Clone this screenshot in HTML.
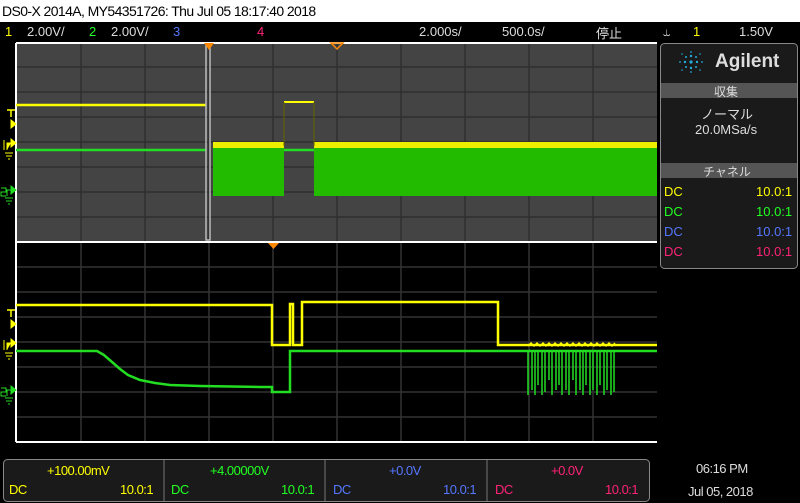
<!DOCTYPE html>
<html><head><meta charset="utf-8"><style>
body{margin:0;width:800px;height:503px;background:#000;overflow:hidden;position:relative;font-family:"Liberation Sans","Noto Sans CJK JP",sans-serif}
.t{position:absolute;white-space:nowrap}
.c{letter-spacing:-0.5px}
</style></head><body>
<div style="position:absolute;left:0;top:0;width:800px;height:22px;background:#fff"></div>
<div class="t" style="left:2px;top:3px;font-size:14px;color:#000;letter-spacing:-0.6px">DS0-X 2014A, MY54351726: Thu Jul 05 18:17:40 2018</div>
<div class="t" style="left:5px;top:24px;font-size:13px;color:#ff0">1</div>
<div class="t" style="left:27px;top:24px;font-size:13px;color:#ddd">2.00V/</div>
<div class="t" style="left:89px;top:24px;font-size:13px;color:#2f2">2</div>
<div class="t" style="left:111px;top:24px;font-size:13px;color:#ddd">2.00V/</div>
<div class="t" style="left:173px;top:24px;font-size:13px;color:#57f">3</div>
<div class="t" style="left:257px;top:24px;font-size:13px;color:#f27">4</div>
<div class="t" style="left:419px;top:24px;font-size:13px;color:#ddd">2.000s/</div>
<div class="t" style="left:502px;top:24px;font-size:13px;color:#ddd">500.0s/</div>
<div class="t" style="left:596px;top:23px;font-size:13px;color:#ddd">停止</div>
<div class="t" style="left:663px;top:24px;font-size:13px;color:#ddd">⥿</div>
<div class="t" style="left:693px;top:24px;font-size:13px;color:#ff0">1</div>
<div class="t" style="left:739px;top:24px;font-size:13px;color:#ddd">1.50V</div>

<svg style="position:absolute;left:0;top:0" width="800" height="503">
<rect x="16" y="43" width="641" height="199" fill="#444"/>
<g stroke="#2e2e2e" stroke-width="1.5">
<path d="M81 43V242M145 43V242M209 43V242M273 43V242M337 43V242M401 43V242M465 43V242M529 43V242M593 43V242"/>
<path d="M16 67H657M16 92H657M16 117H657M16 142H657M16 167H657M16 192H657M16 217H657"/>
</g>
<g stroke="#333" stroke-width="1.5">
<path d="M81 242V442M145 242V442M209 242V442M273 242V442M337 242V442M401 242V442M465 242V442M529 242V442M593 242V442"/>
<path d="M16 267H657M16 292H657M16 317H657M16 342H657M16 367H657M16 392H657M16 417H657"/>
</g>
<path d="M16 43H657M16 242H657M16 442H657M16 43V442" stroke="#fff" stroke-width="2" fill="none"/>
<path d="M16 105H206" stroke="#ff0" stroke-width="2.5"/>
<path d="M16 150H206M284 150H314" stroke="#2d2" stroke-width="2.5"/>
<rect x="213" y="146" width="71" height="50" fill="#2b0"/>
<rect x="314" y="146" width="343" height="50" fill="#2b0"/>
<rect x="213" y="142" width="71" height="6" fill="#ee0"/>
<rect x="314" y="142" width="343" height="6" fill="#ee0"/>
<path d="M284 102H314" stroke="#ff0" stroke-width="2"/>
<path d="M284 102V146M314 102V146" stroke="#660" stroke-width="1"/>
<rect x="206" y="44" width="4" height="196" fill="none" stroke="#bbb" stroke-width="1.5"/>
<path d="M204 43h10l-5 7z" fill="#f80"/>
<path d="M331 43h12l-6 6z" fill="none" stroke="#f80" stroke-width="1.5"/>
<path d="M268 243h11l-5.5 6z" fill="#f80"/>
<path d="M16 305H272V345H290V304H293V345H302V302H498V345H657" stroke="#ff0" stroke-width="2.5" fill="none"/>
<path d="M16 351H97L104 355L112 362L120 369L128 375L140 380L155 383L170 385L200 386L260 387L272 387V392H290V351H657" stroke="#2d2" stroke-width="2.5" fill="none"/>
<path d="M528 351V395M532 351V390M535 351V395M538 351V385M542 351V395M545 351V392M549 351V380M552 351V395M556 351V390M559 351V385M562 351V395M566 351V390M569 351V395M573 351V380M576 351V395M580 351V390M583 351V395M586 351V385M590 351V395M593 351V390M597 351V395M600 351V385M604 351V395M607 351V390M611 351V395M614 351V392" stroke="#2d2" stroke-width="1.5"/>
<path d="M528 346l3-3 3 3 3-3 3 3 3-3 3 3 3-3 3 3 3-3 3 3 3-3 3 3 3-3 3 3 3-3 3 3 3-3 3 3 3-3 3 3 3-3 3 3 3-3 3 3 3-3 3 3 3-3 3 3 3-3" stroke="#ff0" stroke-width="1.5" fill="none"/>
<g fill="#ff0" stroke="#ff0">
<path d="M7 110H15M11 110V117" stroke-width="1.5" fill="none"/>
<path d="M11 120l5 4-5 4z"/>
<path d="M4 140V150M7 150V143H11M11 139l5 4-5 4z M5 153h8M6 156h6M8 159h2" stroke-width="1"/>
<path d="M7 310H15M11 310V317" stroke-width="1.5" fill="none"/>
<path d="M11 320l5 4-5 4z"/>
<path d="M4 340V350M7 350V343H11M11 339l5 4-5 4z M5 353h8M6 356h6M8 359h2" stroke-width="1"/>
</g>
<g fill="#2d2" stroke="#2d2">
<path d="M1 188h5v4h-5v4h5M7 196V190H11M5 198h8M6 201h6M8 204h2" stroke-width="1" fill="none"/>
<path d="M11 186l5 4-5 4z"/>
<path d="M1 388h5v4h-5v4h5M7 396V390H11M5 398h8M6 401h6M8 404h2" stroke-width="1" fill="none"/>
<path d="M11 386l5 4-5 4z"/>
</g>
<rect x="660.5" y="43.5" width="137" height="225" rx="4" fill="#1a1a1a" stroke="#888"/>
<rect x="661" y="83" width="136" height="15" fill="#555"/>
<rect x="661" y="163" width="136" height="15" fill="#555"/>
<g fill="#2ad">
<circle cx="691" cy="62" r="1.6"/><circle cx="685" cy="62" r="1.2"/><circle cx="697" cy="62" r="1.2"/><circle cx="680" cy="62" r="0.9"/><circle cx="702" cy="62" r="0.9"/>
<circle cx="691" cy="56" r="1.2"/><circle cx="691" cy="68" r="1.2"/><circle cx="691" cy="52" r="0.9"/><circle cx="691" cy="72" r="0.9"/>
<circle cx="686" cy="57" r="1"/><circle cx="696" cy="57" r="1"/><circle cx="686" cy="67" r="1"/><circle cx="696" cy="67" r="1"/>
<circle cx="682" cy="54" r="0.8"/><circle cx="700" cy="54" r="0.8"/><circle cx="682" cy="70" r="0.8"/><circle cx="700" cy="70" r="0.8"/>
</g>
<rect x="3.5" y="459.5" width="646" height="42" rx="4" fill="#1a1a1a" stroke="#888"/>
<path d="M164 460V501M325 460V501M487 460V501" stroke="#777"/>
</svg>
<div class="t" style="left:715px;top:51px;font-size:19px;font-weight:bold;color:#ddd">Agilent</div>
<div class="t" style="left:714px;top:83px;font-size:12px;color:#ddd">収集</div>
<div class="t" style="left:701px;top:104px;font-size:13px;color:#ddd">ノーマル</div>
<div class="t" style="left:695px;top:122px;font-size:13px;color:#ddd">20.0MSa/s</div>
<div class="t" style="left:703px;top:163px;font-size:12px;color:#ddd">チャネル</div>
<div class="t" style="left:664px;top:184px;font-size:13px;color:#ff0">DC</div><div class="t" style="left:756px;top:184px;font-size:13px;color:#ff0">10.0:1</div>
<div class="t" style="left:664px;top:204px;font-size:13px;color:#2f2">DC</div><div class="t" style="left:756px;top:204px;font-size:13px;color:#2f2">10.0:1</div>
<div class="t" style="left:664px;top:224px;font-size:13px;color:#57f">DC</div><div class="t" style="left:756px;top:224px;font-size:13px;color:#57f">10.0:1</div>
<div class="t" style="left:664px;top:244px;font-size:13px;color:#f27">DC</div><div class="t" style="left:756px;top:244px;font-size:13px;color:#f27">10.0:1</div>

<div class="t c" style="left:47px;top:463px;font-size:13px;color:#ff0">+100.00mV</div>
<div class="t c" style="left:9px;top:482px;font-size:13px;color:#ff0">DC</div><div class="t c" style="left:120px;top:482px;font-size:13px;color:#ff0">10.0:1</div>
<div class="t c" style="left:210px;top:463px;font-size:13px;color:#2f2">+4.00000V</div>
<div class="t c" style="left:171px;top:482px;font-size:13px;color:#2f2">DC</div><div class="t c" style="left:281px;top:482px;font-size:13px;color:#2f2">10.0:1</div>
<div class="t c" style="left:389px;top:463px;font-size:13px;color:#57f">+0.0V</div>
<div class="t c" style="left:333px;top:482px;font-size:13px;color:#57f">DC</div><div class="t c" style="left:443px;top:482px;font-size:13px;color:#57f">10.0:1</div>
<div class="t c" style="left:551px;top:463px;font-size:13px;color:#f27">+0.0V</div>
<div class="t c" style="left:495px;top:482px;font-size:13px;color:#f27">DC</div><div class="t c" style="left:605px;top:482px;font-size:13px;color:#f27">10.0:1</div>
<div class="t c" style="left:696px;top:461px;font-size:13px;color:#ddd">06:16 PM</div>
<div class="t c" style="left:688px;top:484px;font-size:13px;color:#ddd">Jul 05, 2018</div>
</body></html>
